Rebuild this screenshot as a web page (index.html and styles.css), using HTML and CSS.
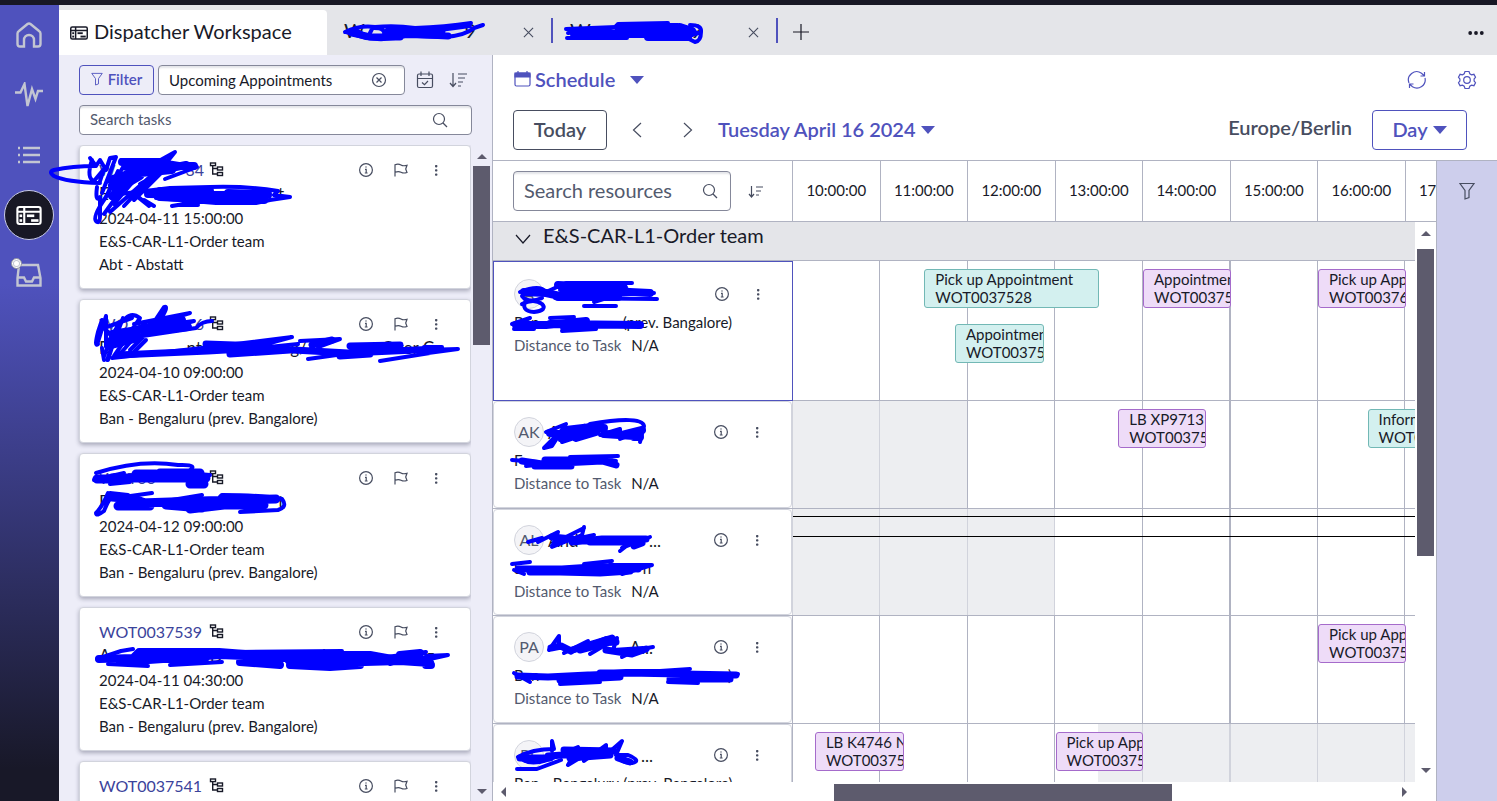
FILE: index.html
```html
<!DOCTYPE html>
<html lang="en">
<head>
<meta charset="utf-8">
<title>Dispatcher Workspace</title>
<link rel="stylesheet" href="styles.css">
</head>
<body>
<svg class="symbols" aria-hidden="true">
  <symbol id="i-info" viewBox="0 0 16 16"><circle cx="8" cy="8" r="6.400"/><path d="M7 7.300h1.200v3.700M6.800 11h2.800"/><circle cx="8" cy="5" r=".7" fill="currentColor" stroke="none"/></symbol>
  <symbol id="i-flag" viewBox="0 0 16 16"><path d="M2 14.500V2.700c2-.8 4.500-.6 6 .3s3.500 1 6 .3L12.700 7l1.300 3.500c-2.500.8-4.500.5-6-.3s-3.500-.9-6 0"/></symbol>
  <symbol id="i-more" viewBox="0 0 16 16"><g fill="currentColor" stroke="none"><rect x="7" y="3" width="2.400" height="2.400" rx=".8"/><rect x="7" y="7.200" width="2.400" height="2.400" rx=".8"/><rect x="7" y="11.400" width="2.400" height="2.400" rx=".8"/></g></symbol>
  <symbol id="i-tree" viewBox="0 0 16 16"><g stroke-width="1.400"><rect x="1.500" y="1" width="5" height="2.600"/><rect x="8.500" y="5" width="5" height="3"/><rect x="8.500" y="10.500" width="5" height="3"/><path d="M3.700 4v8h4.800M3.700 6.500h4.800"/></g></symbol>
  <symbol id="i-search" viewBox="0 0 16 16"><circle cx="7" cy="7" r="5.500"/><path d="M11 11l4 4"/></symbol>
  <symbol id="i-sort" viewBox="0 0 18 16"><path d="M4 1v13M1 11l3 3.500 3-3.500M9 2h9M9 6h7M9 10h5M9 14h3"/></symbol>
  <symbol id="i-sort-small" viewBox="0 0 16 13"><path d="M3.500 1v10.500M1 9l2.500 3L6 9M8 2h7M8 6h5M8 10h3"/></symbol>
  <symbol id="i-funnel" viewBox="0 0 16 18"><path d="M1 1.500h14l-5 7v7l-4 1.500V8.500z"/></symbol>
  <symbol id="i-board" viewBox="0 0 24 18"><rect x="1" y="1" width="22" height="16" rx="2"/><path d="M1 5.500h22M7.500 1v16"/><g fill="currentColor" stroke="none"><rect x="3" y="8" width="2.500" height="2.500"/><rect x="3" y="12.500" width="2.500" height="2.500"/><rect x="10" y="8" width="7" height="2.500"/><rect x="14" y="12.500" width="7" height="2.500"/></g></symbol>
  <symbol id="i-close" viewBox="0 0 12 12"><path d="M1 1l10 10M11 1L1 11"/></symbol>
</svg>

<header class="topline"></header>
<div class="app">
  <nav class="rail" aria-label="Main">
    <a href="#" class="rail-item" aria-label="Home"><svg width="26" height="26" viewBox="0 0 26 26"><path d="M1.500 11.500Q1.500 10 3 9L11.500 2Q13 .8 14.500 2L23 9q1.500 1 1.500 2.500V22a2.500 2.500 0 0 1-2.500 2.500h-4V18a5 5 0 0 0-10 0v6.500H4A2.500 2.500 0 0 1 1.500 22z"/></svg></a>
    <a href="#" class="rail-item" aria-label="Activity"><svg width="28" height="26" viewBox="0 0 28 26"><path d="M0 10.500h5.500L9.500 2l3 22 4.500-17 3.500 10 2.500-8h5"/></svg></a>
    <a href="#" class="rail-item" aria-label="Lists"><svg width="24" height="18" viewBox="0 0 24 18"><path d="M1 2h2M6 2h17M1 9h2M6 9h17M1 16h2M6 16h17"/></svg></a>
    <a href="#" class="rail-item rail-active" aria-label="Workspace"><svg width="26" height="19"><use href="#i-board"/></svg></a>
    <a href="#" class="rail-item" aria-label="Inbox"><svg width="26" height="24" viewBox="0 0 26 24"><path d="M3 2h19l2.500 13v7.500h-23V15zM1.500 14.500H8l2 4h6l2-4h6.500"/></svg><span class="dot"></span></a>
  </nav>

  <div class="shell">
    <div class="tabs">
      <a href="#" class="tab tab-active"><svg width="18" height="14"><use href="#i-board"/></svg><span>Dispatcher Workspace</span></a>
      <div class="tab tab-hidden"><span class="frags"><span>W</span><span>9</span></span><button class="plain" aria-label="Close tab"><svg width="11" height="11"><use href="#i-close"/></svg></button></div>
      <div class="tab tab-hidden"><span class="frags"><span>W</span><span>9</span></span><button class="plain" aria-label="Close tab"><svg width="11" height="11"><use href="#i-close"/></svg></button></div>
      <button class="plain tab-add" aria-label="New tab"><svg width="16" height="16" viewBox="0 0 16 16"><path d="M8 0v16M0 8h16"/></svg></button>
      <button class="plain tab-more" aria-label="More"><svg width="16" height="6" viewBox="0 0 16 6"><g fill="currentColor" stroke="none"><circle cx="2.200" cy="3" r="1.900"/><circle cx="8" cy="3" r="1.900"/><circle cx="13.800" cy="3" r="1.900"/></g></svg></button>
    </div>

    <div class="work">
      <section class="tasks" aria-label="Tasks">
        <div class="filters">
          <button class="filter-btn"><svg width="12" height="14"><use href="#i-funnel"/></svg>Filter</button>
          <div class="field preset"><input type="text" aria-label="Preset" value="Upcoming Appointments"><button class="plain" aria-label="Clear"><svg width="16" height="16" viewBox="0 0 16 16"><circle cx="8" cy="8" r="6.500"/><path d="M5.500 5.500l5 5M10.500 5.500l-5 5"/></svg></button></div>
          <button class="plain" aria-label="Calendar"><svg width="18" height="18" viewBox="0 0 18 18"><rect x="1.500" y="3" width="15" height="13.500" rx="1.500"/><path d="M1.500 7.500h15M5 .5v4.500M13 .5v4.500M6 11.500l2.500 2.200L12 10"/></svg></button>
          <button class="plain" aria-label="Sort"><svg width="18" height="16"><use href="#i-sort"/></svg></button>
        </div>
        <div class="field task-search"><input type="text" aria-label="Search tasks" placeholder="Search tasks"><svg width="16" height="16"><use href="#i-search"/></svg></div>
        <div class="task-body">
          <div class="cards">
            <article class="card"><div class="card-top"><a href="#" class="frags"><span>W</span><span>34</span></a><svg width="16" height="16"><use href="#i-tree"/></svg><span class="acts"><button class="plain" aria-label="Info"><svg width="16" height="16"><use href="#i-info"/></svg></button><button class="plain" aria-label="Flag"><svg width="16" height="16"><use href="#i-flag"/></svg></button><button class="plain" aria-label="More"><svg width="16" height="16"><use href="#i-more"/></svg></button></span></div><h3 class="frags short"><span>E</span><span>t</span></h3><p>2024-04-11 15:00:00</p><p>E&amp;S-CAR-L1-Order team</p><p>Abt - Abstatt</p></article>
            <article class="card"><div class="card-top"><a href="#" class="frags"><span>WO</span><span>6</span></a><svg width="16" height="16"><use href="#i-tree"/></svg><span class="acts"><button class="plain" aria-label="Info"><svg width="16" height="16"><use href="#i-info"/></svg></button><button class="plain" aria-label="Flag"><svg width="16" height="16"><use href="#i-flag"/></svg></button><button class="plain" aria-label="More"><svg width="16" height="16"><use href="#i-more"/></svg></button></span></div><h3 class="frags"><span>D</span><span>ntm</span><span>g/</span><span>Over C</span></h3><p>2024-04-10 09:00:00</p><p>E&amp;S-CAR-L1-Order team</p><p>Ban - Bengaluru (prev. Bangalore)</p></article>
            <article class="card"><div class="card-top"><a href="#" class="frags"><span>WOT00</span><span>5</span></a><svg width="16" height="16"><use href="#i-tree"/></svg><span class="acts"><button class="plain" aria-label="Info"><svg width="16" height="16"><use href="#i-info"/></svg></button><button class="plain" aria-label="Flag"><svg width="16" height="16"><use href="#i-flag"/></svg></button><button class="plain" aria-label="More"><svg width="16" height="16"><use href="#i-more"/></svg></button></span></div><h3 class="frags short"><span>P</span><span>t</span></h3><p>2024-04-12 09:00:00</p><p>E&amp;S-CAR-L1-Order team</p><p>Ban - Bengaluru (prev. Bangalore)</p></article>
            <article class="card"><div class="card-top"><a href="#">WOT0037539</a><svg width="16" height="16"><use href="#i-tree"/></svg><span class="acts"><button class="plain" aria-label="Info"><svg width="16" height="16"><use href="#i-info"/></svg></button><button class="plain" aria-label="Flag"><svg width="16" height="16"><use href="#i-flag"/></svg></button><button class="plain" aria-label="More"><svg width="16" height="16"><use href="#i-more"/></svg></button></span></div><h3 class="frags"><span>A</span><span>D</span><span>l</span><span>g</span></h3><p>2024-04-11 04:30:00</p><p>E&amp;S-CAR-L1-Order team</p><p>Ban - Bengaluru (prev. Bangalore)</p></article>
            <article class="card"><div class="card-top"><a href="#">WOT0037541</a><svg width="16" height="16"><use href="#i-tree"/></svg><span class="acts"><button class="plain" aria-label="Info"><svg width="16" height="16"><use href="#i-info"/></svg></button><button class="plain" aria-label="Flag"><svg width="16" height="16"><use href="#i-flag"/></svg></button><button class="plain" aria-label="More"><svg width="16" height="16"><use href="#i-more"/></svg></button></span></div></article>
          </div>
          <div class="vbar"><i class="tri up"></i><div class="track"><i class="thumb thumb-tasks"></i></div><i class="tri down"></i></div>
        </div>
      </section>

      <main class="schedule">
        <div class="sched-head">
          <button class="plain view-name"><svg width="17" height="16" viewBox="0 0 17 16"><rect x="1" y="2" width="15" height="13" rx="1.500"/><path d="M1 2h15v4H1z" fill="currentColor"/><path d="M4 0v3M13 0v3"/></svg>Schedule<i class="caret"></i></button>
          <span class="head-tools"><button class="plain" aria-label="Refresh"><svg width="20" height="20" viewBox="0 0 20 20"><path d="M2 13A8.300 8.300 0 0 1 14.500 3.200L17 5.500M17.500 2v4h-4M18 8A8.300 8.300 0 0 1 5.500 16.800L3 14.500M2.500 18v-4h4"/></svg></button><button class="plain" aria-label="Settings"><svg width="20" height="20" viewBox="0 0 20 20"><circle cx="10" cy="10" r="3.300"/><path d="M8 1.500h4l.8 2.300 1.700 1 2.400-.5 1.600 3-1.400 1.700v2l1.400 1.700-1.600 3-2.400-.5-1.700 1-.8 2.300H8l-.8-2.300-1.700-1-2.400.5-1.600-3L2.900 11V9L1.500 7.300l1.600-3 2.400.5 1.700-1z"/></svg></button></span>
        </div>
        <div class="date-row">
          <button class="today">Today</button>
          <button class="plain arrow" aria-label="Previous"><svg width="10" height="16" viewBox="0 0 10 16"><path d="M9 1L1.500 8 9 15"/></svg></button>
          <button class="plain arrow" aria-label="Next"><svg width="10" height="16" viewBox="0 0 10 16"><path d="M1 1l7.500 7L1 15"/></svg></button>
          <button class="plain date">Tuesday April 16 2024<i class="caret"></i></button>
          <span class="zone">Europe/Berlin</span>
          <button class="day">Day<i class="caret"></i></button>
        </div>
        <div class="board">
          <div class="planner">
            <div class="hours-row">
              <div class="res-tools"><div class="field res-search"><input type="text" aria-label="Search resources" placeholder="Search resources"><svg width="16" height="16"><use href="#i-search"/></svg></div><button class="plain" aria-label="Sort resources"><svg width="16" height="13"><use href="#i-sort-small"/></svg></button></div>
              <div class="window"><div class="hours"><span>10:00:00</span><span>11:00:00</span><span>12:00:00</span><span>13:00:00</span><span>14:00:00</span><span>15:00:00</span><span>16:00:00</span><span>17:00:00</span></div></div>
            </div>
            <div class="plan-body">
              <div class="rows">
                <button class="group"><svg width="16" height="10" viewBox="0 0 16 10"><path d="M1 1l7 8 7-8"/></svg>E&amp;S-CAR-L1-Order team</button>
                <div class="row tall">
                  <div class="res selected"><div class="res-top"><span class="avatar">A</span><span class="name"></span><button class="plain" aria-label="Info"><svg width="16" height="16"><use href="#i-info"/></svg></button><button class="plain" aria-label="More"><svg width="16" height="16"><use href="#i-more"/></svg></button></div><p class="place frags wide"><span>Ban</span><span>(prev. Bangalore)</span></p><p class="dist">Distance to Task <b>N/A</b></p></div>
                  <div class="window"><div class="lane">
                    <div class="event teal" style="--start:90;--len:120">Pick up Appointment<br>WOT0037528</div>
                    <div class="event teal second" style="--start:111;--len:61">Appointment<br>WOT00375</div>
                    <div class="event violet" style="--start:240;--len:60">Appointment<br>WOT00375</div>
                    <div class="event violet" style="--start:360;--len:60">Pick up Appointment<br>WOT00376</div>
                  </div></div>
                </div>
                <div class="row">
                  <div class="res"><div class="res-top"><span class="avatar">AK</span><span class="name frags mid"><span>A</span><span></span></span><button class="plain" aria-label="Info"><svg width="16" height="16"><use href="#i-info"/></svg></button><button class="plain" aria-label="More"><svg width="16" height="16"><use href="#i-more"/></svg></button></div><p class="place">F</p><p class="dist">Distance to Task <b>N/A</b></p></div>
                  <div class="window"><div class="lane">
                    <div class="off" style="--start:0;--len:120"></div>
                    <div class="event violet" style="--start:223;--len:60">LB XP9713<br>WOT00375</div>
                    <div class="event teal" style="--start:394;--len:60">Inform<br>WOT00375</div>
                  </div></div>
                </div>
                <div class="row short-row">
                  <div class="res"><div class="res-top"><span class="avatar">AL</span><span class="name frags mid"><span>And</span><span>...</span></span><button class="plain" aria-label="Info"><svg width="16" height="16"><use href="#i-info"/></svg></button><button class="plain" aria-label="More"><svg width="16" height="16"><use href="#i-more"/></svg></button></div><p class="place frags mid"><span>S</span><span>n</span></p><p class="dist">Distance to Task <b>N/A</b></p></div>
                  <div class="window"><div class="lane">
                    <div class="off" style="--start:0;--len:180"></div>
                    <div class="band"></div>
                  </div></div>
                </div>
                <div class="row">
                  <div class="res"><div class="res-top"><span class="avatar">PA</span><span class="name frags near"><span></span><span>A...</span></span><button class="plain" aria-label="Info"><svg width="16" height="16"><use href="#i-info"/></svg></button><button class="plain" aria-label="More"><svg width="16" height="16"><use href="#i-more"/></svg></button></div><p class="place frags wide"><span>Ban</span><span>)</span></p><p class="dist">Distance to Task <b>N/A</b></p></div>
                  <div class="window"><div class="lane">
                    <div class="event violet" style="--start:360;--len:60">Pick up Appointment<br>WOT00375</div>
                  </div></div>
                </div>
                <div class="row">
                  <div class="res"><div class="res-top"><span class="avatar">PL</span><span class="name frags near"><span></span><span>...</span></span><button class="plain" aria-label="Info"><svg width="16" height="16"><use href="#i-info"/></svg></button><button class="plain" aria-label="More"><svg width="16" height="16"><use href="#i-more"/></svg></button></div><p class="place">Ban - Bengaluru (prev. Bangalore)</p></div>
                  <div class="window"><div class="lane">
                    <div class="off" style="--start:210;--len:270"></div>
                    <div class="event violet" style="--start:15;--len:61">LB K4746 N<br>WOT00375</div>
                    <div class="event violet" style="--start:180;--len:60">Pick up Appointment<br>WOT00375</div>
                  </div></div>
                </div>
              </div>
              <div class="vbar vbar-plan"><i class="tri up"></i><div class="track"><i class="thumb thumb-plan"></i></div><i class="tri down"></i></div>
            </div>
            <div class="hbar"><i class="tri left"></i><div class="track"><i class="thumb-h"></i></div><i class="tri right"></i></div>
          </div>
          <aside class="side"><button class="plain" aria-label="Filter resources"><svg width="16" height="18"><use href="#i-funnel"/></svg></button></aside>
        </div>
      </main>
    </div>
  </div>
</div>

<svg class="ink" width="760" height="801" viewBox="0 0 760 801" aria-hidden="true">
  <g>
    <path d="M345 32q14-7 30-5q20-2 40 1q30-1 56-5M346 32l20 6q20 3 40-2l40 1q20-2 28-9l9-3M356 30l12 7 4-8M374 28q12 0 10 7M440 30l30-4"/>
    <path d="M352 33l14 3M388 31h54M388 33l60 3M370 37l30 0" stroke-width="7"/>
    <path d="M566 29l50-2M568 33l60-7M567 38h60M618 24l50-1M690 25q12 0 11 7q0 9-6 10l-8-4M686 30l12 3-12 4"/>
    <path d="M574 34h112M618 27l60 0M648 37l40 0M680 27l12 4" stroke-width="8"/>
  </g>
  <g>
    <path d="M96 166q-24 0-42 4q-6 2 0 6q12 6 46 7M92 160q-6 18 2 21l10-12-4 12M90 158l6 8 4-6 6 10 4-12 6-1-14 36M97 187q-2 16 3 10l0 18q0 10-4 6t10-24l12-26M104 200l22-38M104 214l36-50M114 204l34-40M110 212l50-44M124 206l34-36M134 200l28-28M140 184l36-20M121 160l36 2 18-10-8 10 30 5-32 12"/>
    <path d="M122 162l42 0M126 167l40 2 20-4M130 174l42-4M110 180l30-10M112 186l20-8M166 166l28 0M112 196l16-14M116 190l24-14" stroke-width="8"/>
    <path d="M120 194l50-6 40-1q40-1 68 4l-4 4 16 2-20 3-14 3h-40l-60-5M135 194l14 12-10-8M172 206l18-3M178 205l20 0M144 200l10 6"/>
    <path d="M148 194l60 1h60M160 191h50M210 198l54 2M228 193l40 1M160 197l60 3" stroke-width="8"/>
    <path d="M102 320l-4 12q-4 16 0 12M98 342l8-26 0 30 14-24-12 38M104 356l8-20-8-8 28-10M107 360l16-42M114 356l26-38q-8-6-14 0M120 354l26-30M130 350l18-18M134 352l12-12M154 322l10-15q5-2-2 10l-6 8M134 324l56-11-50 15 54-7-58 16 60-9q6-7 16-7"/>
    <path d="M112 334l38-6 32-8M144 332l44-5M108 346l30-8M112 340l30-12" stroke-width="8"/>
    <path d="M104 360l-2-12M112 358l90-10 90-11-44 12 50-5M300 341l40-2-22 8M308 359l50-7M380 361l50-8M424 347l18 0-18 3 34-1-30 4"/>
    <path d="M118 355l90-4 50-3 90 5 90-4M206 344l60 2M230 354l60-4M312 345l20-5M340 356l30-2M350 346l50-1" stroke-width="7"/>
    <path d="M96 473q44-14 82-8q24-1 8 8l24 2M94 480l30-7M110 484l20-2"/>
    <path d="M97 479h20M112 478h94M160 473h40M190 484h14M136 474h20" stroke-width="9"/>
    <path d="M108 493q-6 14-12 20q0 4 8-2 4-10 6-12M110 493l18 2M116 498l36-5M166 501l36-6M222 495q40 0 60 4q6 8-4 11l-38 2 26-6"/>
    <path d="M112 497l22 2 16 6M118 506l32 0M140 503l60-2 76-2M190 509l34-4h40M166 505l36 3M222 498l40 2" stroke-width="9"/>
    <path d="M97 659l24-8 12-2M108 664l40 2M170 665l52-3M236 652l106-1M378 658l48-6-36 12M426 656l22-1-18 4M394 659l40-2"/>
    <path d="M99 659l34-1 6-6 80 0 26 2M120 662l100-7 90 4M250 655l120 0 22 4M290 665l40 2 30-2M330 663l70-2 30 2M400 655l20-2M426 665l5 0M240 662l40 3" stroke-width="8"/>
    <path d="M140 657h64M290 659h80" stroke-width="12"/>
  </g>
  <g>
    <path d="M520 292q20-8 26 0l20-9h66M560 290l94 3-38 2-22 7M555 298l102 1M522 296q6 8 20 2M526 300q-6 11 8 12 14-2 8-8-8-6-20 0M584 306l32 0"/>
    <path d="M558 285l66 3M524 292l22 1 14 3 50-5 40 2M566 291h60M558 297h60" stroke-width="8"/>
    <path d="M512 324l18-6M550 318l24-1M562 331l34-2M514 329h20M600 324l40 2"/>
    <path d="M516 325l30 0 40-4M550 324l90 1M564 327l30 0" stroke-width="8"/>
    <path d="M546 432l20-8-14 22-8 2 20-20 12 10 14-14q52-9 54 2l-4 16M562 442l30-10-32 8M600 435l20-6 0 10 20-8"/>
    <path d="M550 433l24 3M566 430l34-4M576 438l20-6M622 435l20-5M634 437l6 0M590 428h14M564 436l20-8M604 434l30 2" stroke-width="8"/>
    <path d="M512 460l26 2M570 457l48-1M594 457l22 4M526 466l20-2"/>
    <path d="M522 461l20 3 60-3 14 4M545 460l50 0M535 466h36" stroke-width="7"/>
    <path d="M528 542l14-4-4 4 20-10-6 15 30-12 2-8M552 546l12-8 20-10M580 538l14-3M620 551l14-11-12 8 28-11"/>
    <path d="M552 537l20 2M572 542l30-3 44 0M590 542h40M634 546l8-3" stroke-width="7"/>
    <path d="M512 564l18-2M584 564l28-3M514 570l10 4M610 565l42 0-30 9"/>
    <path d="M518 569l44 0 30-2M560 572l40 1 30-2M594 566l44 3M530 572h30" stroke-width="7"/>
    <path d="M549 650l10-14 0 12M564 653l24-12M572 652l34-14M590 654l27-16-4 12 30-2M622 657l14-7 17-3"/>
    <path d="M551 648l10-2 10 5M572 650l40-12M606 650l26 4 14-5M600 643l16-1M580 650l30-8" stroke-width="7"/>
    <path d="M514 673l16 9M560 684l40-2M590 674l36-3 34 0 30-2M668 682l30 1M700 674l38 0-30 6"/>
    <path d="M518 676l30 1 80-4 108 2M560 680l60-3M670 679l60 0M600 673h30" stroke-width="7"/>
    <path d="M517 769l20 0 24-9M518 757q14-8 36-8l-2-8 0 10M520 757q10 12 40-2l18-8-10 18 20-12-4 8 22-16 0 10 16-14-6 14 12 0q14 6 4 8-12 0-14-8"/>
    <path d="M520 758l30 0M548 756l60-4M564 750l50 1M570 758l40-3M618 758l12 4" stroke-width="7"/>
  </g>
</svg>
</body>
</html>
```

FILE: styles.css
```css
* { box-sizing: border-box; }

body {
  margin: 0;
  height: 100vh;
  overflow: hidden;
  display: flex;
  flex-direction: column;
  font-family: Lato, "Noto Sans", sans-serif;
  font-size: 15px;
  line-height: 23px;
  color: #181a28;
  background: #fff;
}

h3, p { margin: 0; font-weight: 400; }
a { color: inherit; text-decoration: none; }
button, input { font: inherit; color: inherit; }
svg { fill: none; stroke: currentColor; stroke-width: 1.2; flex: none; display: block; }
.symbols { position: absolute; width: 0; height: 0; }

.plain {
  border: 0;
  background: none;
  padding: 0;
  display: flex;
  align-items: center;
  color: #474d60;
}

.frags { display: flex; justify-content: space-between; }

.topline { height: 5px; background: #181825; flex: none; }
.app { flex: 1; display: flex; min-height: 0; }

/* Navigation rail */
.rail {
  width: 59px;
  flex: none;
  display: flex;
  flex-direction: column;
  gap: 10px;
  align-items: center;
  padding: 5px 1px 0 0;
  background: linear-gradient(#4f52bd 0, #4f52bd 35%, #181828 96%);
  color: #c3c6d2;
}
.rail-item {
  position: relative;
  width: 50px;
  height: 50px;
  display: flex;
  align-items: center;
  justify-content: center;
}
.rail-item svg { stroke-width: 2.4; }
.rail-active { background: #181825; border: 1px solid #c9cbe8; border-radius: 50%; color: #fff; }
.rail-active svg { stroke-width: 2; }
.dot {
  position: absolute;
  left: 7px;
  top: 8px;
  width: 11px;
  height: 11px;
  border-radius: 50%;
  background: #fff;
  border: 1px solid #8d90a0;
  box-shadow: inset 0 0 0 1px #fff, inset 0 0 0 2px #c3c6d2;
}

.shell { flex: 1; min-width: 0; display: flex; flex-direction: column; }

/* Tabs */
.tabs {
  height: 50px;
  flex: none;
  display: flex;
  align-items: center;
  background: #e4e5e9;
  font-size: 20px;
}
.tab { display: flex; align-items: center; }
.tab-active {
  align-self: flex-end;
  height: 45px;
  width: 268px;
  padding: 0 0 2px 11px;
  gap: 6px;
  background: #fff;
  border-radius: 0 4px 0 0;
}
.tab-active svg { stroke-width: 2; margin-top: 3px; }
.tab-hidden {
  width: 226px;
  height: 25px;
  padding: 0 17px;
  justify-content: space-between;
  border-right: 2px solid #4f52bd;
}
.tab-hidden + .tab-hidden { width: 225px; }
.tab-hidden .frags { width: 132px; }
.tab-hidden .plain { margin-top: 4px; }
.tab-add { margin: 4px 0 0 15px; color: #181825; }
.tab-more { margin: 5px 13px 0 auto; color: #181825; }

.work { flex: 1; min-height: 0; display: flex; }

/* Task list */
.tasks {
  width: 433px;
  flex: none;
  display: flex;
  flex-direction: column;
  gap: 10px;
  padding: 10px 0 0 20px;
  background: #ededf8;
}
.filters { display: flex; align-items: center; gap: 4px; }
.filters > .plain { margin-left: 5px; width: 22px; justify-content: center; }
.filters > .plain + .plain { margin-left: 7px; }
.filter-btn {
  width: 75px;
  height: 30px;
  display: flex;
  align-items: center;
  justify-content: center;
  gap: 5px;
  padding: 0 0 2px;
  border: 1px solid #4f52bd;
  border-radius: 4px;
  background: none;
  color: #4f52bd;
  font-weight: 600;
}
.field {
  display: flex;
  align-items: center;
  height: 30px;
  border: 1px solid #85889a;
  border-radius: 4px;
  background: #fff;
  box-shadow: inset 0 3px 2px -1px #e4e5e9;
  color: #474d60;
}
.field input {
  flex: 1;
  min-width: 0;
  border: 0;
  padding: 0 0 0 10px;
  background: none;
  outline: 0;
  color: #181a28;
}
.field input::placeholder { color: #535a6e; opacity: 1; }
.preset { width: 247px; padding-right: 17px; }
.task-search { width: 393px; padding-right: 23px; }
.task-search input, .res-search input { padding-bottom: 2px; }

.task-body { flex: 1; min-height: 0; display: flex; }
.cards {
  flex: 1;
  overflow: hidden;
  display: flex;
  flex-direction: column;
  gap: 10px;
  margin-left: -6px;
  padding-left: 6px;
}
.card {
  flex: none;
  height: 144px;
  padding: 12px 19px 0;
  background: #fff;
  border: 1px solid #d2d4dd;
  border-radius: 4px;
  box-shadow: 0 2px 4px rgba(40, 42, 70, .35);
}
.card-top { display: flex; align-items: center; gap: 5px; color: #181a28; }
.card-top a { width: 105px; color: #3b439b; font-size: 16px; }
.acts { margin-left: auto; margin-right: 7px; display: flex; gap: 19px; }
.card h3 { font-size: 17px; line-height: 26px; width: 335px; }
.card h3.short { width: 185px; }

/* Scrollbars */
.vbar {
  width: 21px;
  flex: none;
  display: flex;
  flex-direction: column;
  align-items: center;
  padding: 9px 0 7px;
}
.track { flex: 1; min-height: 0; }
.vbar .track { padding-top: 7px; }
.thumb { display: block; width: 17px; background: #5d5b6d; }
.thumb-tasks { height: 179px; }
.thumb-plan { height: 307px; }
.tri { width: 0; height: 0; border: 5px solid transparent; }
.tri.up { border-top: 0; border-bottom-color: #5d5b6d; }
.tri.down { border-bottom: 0; border-top-color: #5d5b6d; }
.tri.left { border-left: 0; border-right-color: #5d5b6d; }
.tri.right { border-right: 0; border-left-color: #5d5b6d; }
.hbar { height: 19px; flex: none; display: flex; align-items: center; padding: 0 29px 0 8px; }
.hbar .track { padding: 2px 0 0 36%; height: 19px; }
.thumb-h { display: block; width: 338px; height: 17px; margin-left: 2px; background: #5d5b6d; }

/* Schedule */
.schedule { flex: 1; min-width: 0; display: flex; flex-direction: column; border-left: 1px solid #b0b3c2; }
.sched-head { height: 50px; flex: none; display: flex; align-items: center; justify-content: space-between; padding: 0 20px; }
.caret {
  width: 0;
  height: 0;
  margin-top: 2px;
  border: 7px solid transparent;
  border-top: 8px solid currentColor;
  border-bottom: 0;
}
.view-name { gap: 4px; font-size: 20px; font-weight: 600; color: #4f52bd; padding: 0 0 2px 1px; }
.view-name .caret { margin-left: 11px; }
.head-tools { display: flex; gap: 30px; }
.head-tools .plain { color: #4f52bd; }
.date-row {
  height: 55px;
  flex: none;
  display: flex;
  align-items: flex-start;
  padding: 5px 30px 0 20px;
  font-size: 20px;
  font-weight: 600;
  color: #474d60;
}
.date-row > * { height: 40px; }
.today, .day {
  display: flex;
  align-items: center;
  justify-content: center;
  background: #fff;
  border: 1px solid #474d60;
  border-radius: 4px;
  padding: 0 0 2px;
}
.today { width: 94px; }
.day { width: 95px; gap: 5px; color: #4f52bd; border-color: #4f52bd; }
.arrow { width: 51px; justify-content: center; }
.today + .arrow { margin-left: 4px; }
.date { gap: 5px; margin-left: 5px; padding-bottom: 2px; color: #4f52bd; }
.zone { margin-left: auto; margin-right: 20px; line-height: 34px; }

.board { flex: 1; min-height: 0; display: flex; border-top: 1px solid #b0b3c2; }
.planner { flex: 1; min-width: 0; display: flex; flex-direction: column; }
.side { width: 61px; flex: none; background: #cdceec; border-left: 1px solid #b0b3c2; display: flex; justify-content: center; align-items: flex-start; padding-top: 21px; }
.hours-row { height: 61px; flex: none; display: flex; border-bottom: 1px solid #b0b3c2; }
.res-tools { width: 299px; flex: none; display: flex; align-items: center; gap: 17px; padding-left: 20px; }
.res-search { width: 218px; height: 40px; font-size: 20px; padding-right: 12px; }
.window { flex: 1; min-width: 0; overflow: hidden; }
.hours { width: 700px; height: 100%; display: grid; grid-template-columns: repeat(8, 1fr); }
.hours span { border-left: 1px solid #b0b3c2; text-align: center; line-height: 58px; }

.plan-body { flex: 1; min-height: 0; display: flex; }
.rows { flex: 1; min-width: 0; overflow: hidden; }
.vbar-plan { padding-bottom: 9px; }
.vbar-plan .track { padding-top: 13px; }
.group {
  width: 100%;
  height: 39px;
  display: flex;
  align-items: center;
  gap: 12px;
  padding: 0 0 11px 22px;
  border: 0;
  border-bottom: 1px solid #b0b3c2;
  background: #e4e5e9;
  font-size: 20px;
}
.group svg { margin-top: 6px; }
.row { display: flex; height: 108px; border-bottom: 1px solid #b0b3c2; }
.row.tall { height: 140px; }
.row.short-row { height: 107px; }
.res {
  width: 299px;
  flex: none;
  padding: 15px 26px 0 20px;
  border: 1px solid #d2d4dd;
  border-radius: 4px;
  background: #fff;
  overflow: hidden;
}
.res.selected { border-color: #4f52bd; border-radius: 0; margin: 0 -1px -1px 0; position: relative; width: 300px; padding-top: 17px; z-index: 1; }
.res-top { display: flex; align-items: center; gap: 4px; height: 30px; margin-bottom: 2px; }
.res-top .plain { margin-left: 16px; }
.avatar {
  width: 30px;
  height: 30px;
  border: 1px solid #d2d4dd;
  border-radius: 50%;
  background: #f4f4f7;
  color: #535a6e;
  text-align: center;
  line-height: 27px;
  font-size: 16px;
}
.name { font-size: 17px; flex: 1; }
.name.mid { flex: none; width: 113px; }
.name.near { flex: none; width: 105px; }
.name.frags + .plain { margin-left: auto; }
.place.mid { width: 137px; }
.place.wide { width: 218px; }
.dist { color: #535a6e; }
.dist b { font-weight: 400; color: #181a28; margin-left: 6px; }
.lane {
  position: relative;
  width: 700px;
  height: 100%;
  background: repeating-linear-gradient(90deg, #b0b3c2 0 1px, transparent 1px 12.5%);
}
.off, .event {
  position: absolute;
  left: calc(var(--start) / 480 * 100%);
  width: calc(var(--len) / 480 * 100%);
}
.off { top: 0; bottom: 0; background: rgba(228, 229, 233, .65); }
.event {
  top: 8px;
  height: 39px;
  margin-left: 1px;
  padding-left: 10px;
  border: 1px solid;
  border-radius: 3px;
  line-height: 18px;
  white-space: nowrap;
  overflow: hidden;
}
.event.second { top: 63px; }
.teal { background: #d3f0ef; border-color: #72b8b5; }
.violet { background: #eedcf8; border-color: #a56bcb; }
.band { position: absolute; left: 1px; right: 0; top: 7px; height: 21px; border: solid #000; border-width: 1px 0; }

/* Freehand strokes over names and numbers */
.ink { position: absolute; left: 0; top: 0; z-index: 2; pointer-events: none; color: #00f; stroke-width: 4; stroke-linecap: round; stroke-linejoin: round; }
```
